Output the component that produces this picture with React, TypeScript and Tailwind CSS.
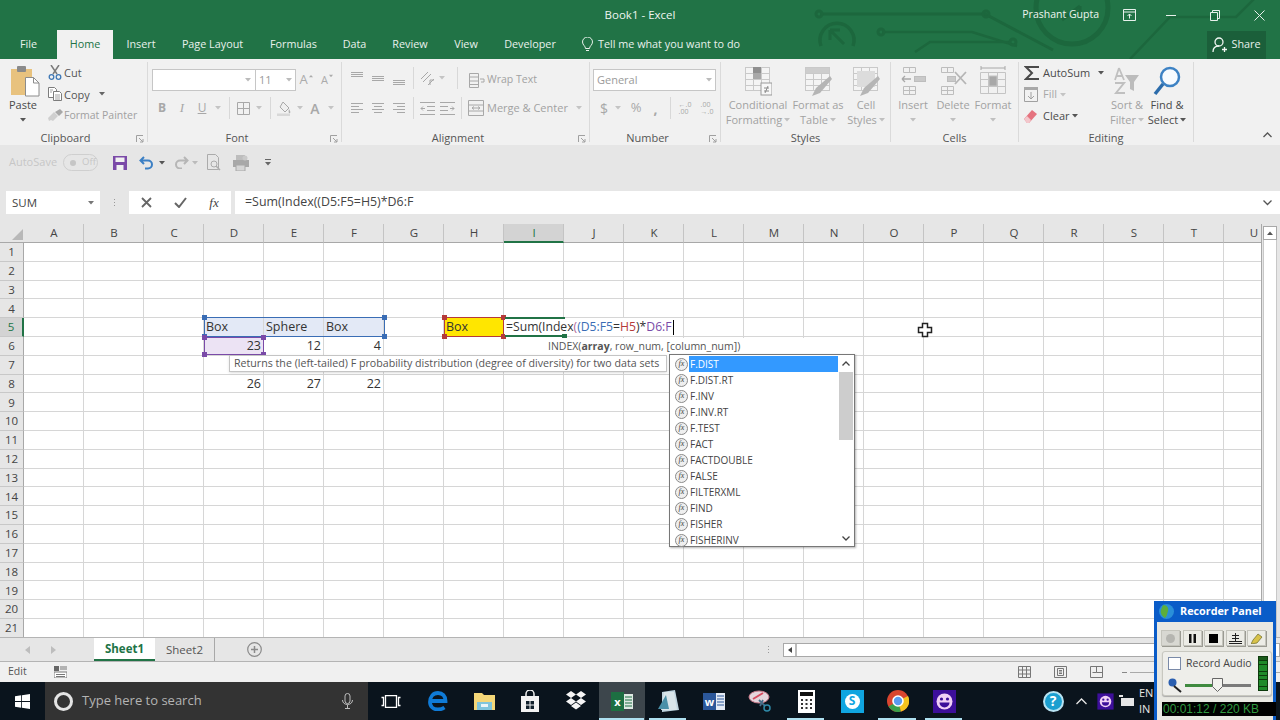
import type { ReactNode } from 'react';

const COLUMNS = ['A', 'B', 'C', 'D', 'E', 'F', 'G', 'H', 'I', 'J', 'K', 'L', 'M', 'N', 'O', 'P', 'Q', 'R', 'S', 'T', 'U'];
const ROWS = Array.from({ length: 21 }, (_, i) => i + 1);
const FUNCTIONS = ['F.DIST', 'F.DIST.RT', 'F.INV', 'F.INV.RT', 'F.TEST', 'FACT', 'FACTDOUBLE', 'FALSE', 'FILTERXML', 'FIND', 'FISHER', 'FISHERINV'];

const CELLS: Record<string, { text: string; right?: boolean; bg?: string }> = {
  D5: { text: 'Box', bg: 'bg-[#e3e9f6]' },
  E5: { text: 'Sphere', bg: 'bg-[#e3e9f6]' },
  F5: { text: 'Box', bg: 'bg-[#e3e9f6]' },
  H5: { text: 'Box', bg: 'bg-[#ffe600]' },
  D6: { text: '23', right: true, bg: 'bg-[#ece3f4]' },
  E6: { text: '12', right: true },
  F6: { text: '4', right: true },
  D8: { text: '26', right: true },
  E8: { text: '27', right: true },
  F8: { text: '22', right: true },
};

function Caret({ className = 'text-[#a5a5a5]' }: { className?: string }) {
  return (
    <svg width="6" height="4" viewBox="0 0 6 4" className={className}>
      <path d="M0 0h6L3 3.5z" fill="currentColor" />
    </svg>
  );
}

function Slot({ className, children }: { className: string; children?: ReactNode }) {
  return <div className={`flex h-full shrink-0 items-center justify-center ${className}`}>{children}</div>;
}

function Sep({ className = 'w-[10px]' }: { className?: string }) {
  return (
    <div className={`flex h-full shrink-0 justify-center ${className}`}>
      <div className="h-full w-px bg-[#d8d8d8]" />
    </div>
  );
}

function Launcher() {
  return (
    <svg width="8" height="8" viewBox="0 0 8 8" className="absolute bottom-[-1px] right-[3px] text-[#a0a0a0]">
      <path d="M0.500 7V0.500H7M3 3l4 4M7 4v3H4" fill="none" stroke="currentColor" />
    </svg>
  );
}

function Group({
  className,
  label,
  labelClass = '',
  launcher,
  children,
}: {
  className: string;
  label: string;
  labelClass?: string;
  launcher?: boolean;
  children: ReactNode;
}) {
  return (
    <div className={`relative mt-[3px] flex h-[80px] shrink-0 flex-col border-r border-[#dadada] ${className}`}>
      <div className="h-[69px] shrink-0">{children}</div>
      <div className={`h-[14px] shrink-0 text-center text-[11px] leading-[14px] text-[#555] ${labelClass}`}>{label}</div>
      {launcher && <Launcher />}
    </div>
  );
}

function BigBtn({
  className,
  icon,
  lines,
  caretInline,
  dim = true,
}: {
  className: string;
  icon: ReactNode;
  lines: string[];
  caretInline?: boolean;
  dim?: boolean;
}) {
  return (
    <div className={`flex shrink-0 flex-col items-center pt-[3px] text-[11px] leading-[15px] ${dim ? 'text-[#a2a2a2]' : 'text-[#4a4a4a]'} ${className}`}>
      <div className="flex h-[32px] items-center justify-center">{icon}</div>
      {lines.map((line, i) => (
        <div key={line} className="flex items-center gap-[2px] whitespace-nowrap">
          {line}
          {caretInline && i === lines.length - 1 && <Caret className={dim ? 'text-[#c0c0c0]' : 'text-[#555]'} />}
        </div>
      ))}
      {!caretInline && lines.length === 1 && (
        <div className="flex h-[15px] items-center">
          <Caret className={dim ? 'text-[#c0c0c0]' : 'text-[#555]'} />
        </div>
      )}
    </div>
  );
}

function AlignLines({ rows }: { rows: number[][] }) {
  return (
    <svg width="14" height="14" viewBox="0 0 14 14" className="text-[#a8a8a8]">
      {rows.map(([y, x, w]) => (
        <rect key={y} x={x} y={y} width={w} height="1" fill="currentColor" />
      ))}
    </svg>
  );
}

function PasteIcon() {
  return (
    <svg width="29" height="33" viewBox="0 0 29 33" className="ml-[4px]">
      <rect x="0" y="4" width="21" height="26" fill="#e8c27e" />
      <rect x="6" y="1" width="9" height="6" rx="1" fill="#8a8a8a" />
      <path d="M14.500 12.500h8l5.500 5.500v13h-13.500z" fill="#fff" stroke="#8c8c8c" />
      <path d="M22.500 12.500v5.500h5.500" fill="none" stroke="#8c8c8c" />
    </svg>
  );
}

function CircuitArt() {
  return (
    <svg width="480" height="59" viewBox="0 0 480 59" className="absolute right-0 top-0 text-[#1c673d]">
      <g fill="none" stroke="currentColor" strokeWidth="3">
        <path d="M20 14h165l68 36" />
        <circle cx="19" cy="14" r="3" />
        <circle cx="186" cy="14" r="3" />
        <path d="M82 32h90l45 14" strokeWidth="2.500" />
        <circle cx="81" cy="32" r="3" />
        <path d="M115 52l15-10h80" strokeWidth="2.500" />
        <circle cx="213" cy="42" r="3" />
        <path d="M21 46a17 17 0 1 1 32 0" strokeWidth="3.500" />
        <path d="M30 30l14 14M30 30h10M30 30v10" strokeWidth="3" />
        <circle cx="272" cy="8" r="36" strokeWidth="5" />
        <path d="M262 20l18-14M280 6v10" />
        <path d="M330 59l40-42h66l30-30" strokeWidth="2.500" />
      </g>
    </svg>
  );
}

function TitleBar() {
  return (
    <div className="relative flex h-[30px] items-center text-[11.500px] text-[#eef5f0]">
      <div className="flex-1" />
      <div className="relative">Book1 - Excel</div>
      <div className="relative flex h-full flex-1 items-center justify-end">
        <span className="mr-[9px] text-[10.500px]">Prashant Gupta</span>
        <Slot className="w-[42px]">
          <svg width="13" height="12" viewBox="0 0 13 12" fill="none" stroke="#e8f1ec">
            <path d="M.5.500h12v11H.5zM.5 3h12M6.500 9.500V5M4.500 7l2-2 2 2" />
          </svg>
        </Slot>
        <Slot className="w-[42px]">
          <div className="h-px w-[10px] bg-[#e8f1ec]" />
        </Slot>
        <Slot className="w-[46px]">
          <svg width="10" height="11" viewBox="0 0 10 11" fill="none" stroke="#e8f1ec">
            <path d="M.5 2.500h7v8h-7zM2.500 2.500v-2h7v8h-2" />
          </svg>
        </Slot>
        <Slot className="w-[42px]">
          <svg width="11" height="11" viewBox="0 0 11 11" stroke="#e8f1ec">
            <path d="M.5.500l10 10M10.500.500l-10 10" />
          </svg>
        </Slot>
      </div>
    </div>
  );
}

function TabRow() {
  const tabs = [
    ['Insert', 'w-[56px]'],
    ['Page Layout', 'w-[87px]'],
    ['Formulas', 'w-[75px]'],
    ['Data', 'w-[47px]'],
    ['Review', 'w-[64px]'],
    ['View', 'w-[48px]'],
    ['Developer', 'w-[80px]'],
  ];
  return (
    <div className="relative flex h-[29px] items-center text-[10.800px] text-[#e8f1ec]">
      <Slot className="w-[57px]">File</Slot>
      <Slot className="w-[56px] bg-[#f1f1f1] text-[#217346]">Home</Slot>
      {tabs.map(([name, width]) => (
        <Slot key={name} className={width}>
          {name}
        </Slot>
      ))}
      <div className="ml-[12px] flex items-center gap-[5px]">
        <svg width="11" height="15" viewBox="0 0 11 15" fill="none" stroke="#e8f1ec">
          <path d="M3.500 11.500c0-2.500-3-3.500-3-6.500a5 5 0 0 1 10 0c0 3-3 4-3 6.500zM4 13.500h3" />
        </svg>
        <span>Tell me what you want to do</span>
      </div>
      <div className="ml-auto mr-[14px] flex h-[28px] w-[59px] items-center justify-center gap-[4px] bg-[#1b5f3a]">
        <svg width="15" height="16" viewBox="0 0 15 16" fill="none" stroke="#f0f6f2" strokeWidth="1.300">
          <circle cx="7" cy="5" r="4" />
          <path d="M1 15c0-4 2.500-6 6-6M10 12.500h5M12.500 10v5" />
        </svg>
        <span>Share</span>
      </div>
    </div>
  );
}

function ClipboardGroup() {
  return (
    <Group className="w-[148px]" label="Clipboard" labelClass="pr-[16px]" launcher>
      <div className="flex h-full">
        <BigBtn className="w-[46px]" dim={false} icon={<PasteIcon />} lines={['Paste']} />
        <div className="flex flex-col text-[11px] leading-[21.500px]">
          <div className="flex h-[21.500px] items-center text-[#555]">
            <Slot className="w-[18px]">
              <svg width="14" height="15" viewBox="0 0 14 15" fill="none">
                <path d="M3 0l6 9M11 0L5 9" stroke="#7a7a7a" strokeWidth="1.500" />
                <circle cx="3.500" cy="12" r="2.300" stroke="#3f78b5" strokeWidth="1.300" />
                <circle cx="10.500" cy="12" r="2.300" stroke="#3f78b5" strokeWidth="1.300" />
              </svg>
            </Slot>
            Cut
          </div>
          <div className="flex h-[21.500px] items-center text-[#555]">
            <Slot className="w-[18px]">
              <svg width="14" height="14" viewBox="0 0 14 14" fill="#fff" stroke="#7c7c7c">
                <path d="M.5.500h6l2 2v8h-8z" />
                <path d="M5.500 4.500h6l2 2v7h-8z" />
                <path d="M7 8h5M7 10h5M7 12h5M2 3h3M2 5h2" strokeWidth=".7" />
              </svg>
            </Slot>
            Copy
            <Caret className="ml-[9px] text-[#666]" />
          </div>
          <div className="flex h-[21.500px] items-center text-[10.500px] text-[#a0a0a0]">
            <Slot className="w-[18px]">
              <svg width="15" height="13" viewBox="0 0 15 13">
                <path d="M0 9l6-6 4 4-5 5-2-1-2 1z" fill="#cfcfcf" />
                <path d="M7 3l5-3 3 3-4 4z" fill="#a8a8a8" />
              </svg>
            </Slot>
            Format Painter
          </div>
        </div>
      </div>
    </Group>
  );
}

function FontGroup() {
  return (
    <Group className="w-[194px]" label="Font" labelClass="pr-[15px]" launcher>
      <div className="pl-[4px] pt-[7px]">
        <div className="flex h-[22px] items-center pr-[3px]">
          <div className="flex h-full w-[104px] items-center justify-end border border-[#c6c6c6] bg-white pr-[4px]">
            <Caret className="text-[#bbb]" />
          </div>
          <div className="flex h-full w-[40px] items-center justify-between border border-l-0 border-[#c6c6c6] bg-white px-[3px] text-[11px] text-[#9a9a9a]">
            11
            <Caret className="text-[#bbb]" />
          </div>
          <Slot className="w-[21px] text-[13px] text-[#ababab]">
            A
            <Caret className="mb-[8px] rotate-180 scale-75 text-[#ababab]" />
          </Slot>
          <Slot className="w-[21px] text-[11px] text-[#ababab]">
            A
            <Caret className="mb-[8px] scale-75 text-[#ababab]" />
          </Slot>
        </div>
        <div className="mt-[6px] flex h-[22px] items-center">
          <Slot className="w-[20px] text-[12px] font-bold text-[#a8a8a8]">B</Slot>
          <Slot className="w-[20px] font-['Liberation_Serif',serif] text-[13px] italic text-[#a8a8a8]">I</Slot>
          <Slot className="w-[20px] text-[12px] text-[#a8a8a8] underline">U</Slot>
          <Slot className="w-[12px]">
            <Caret className="text-[#c4c4c4]" />
          </Slot>
          <Sep />
          <Slot className="w-[18px]">
            <svg width="13" height="13" viewBox="0 0 13 13" fill="none" stroke="#a8a8a8">
              <path d="M.5.500h12v12H.5zM6.500.500v12M.5 6.500h12" />
            </svg>
          </Slot>
          <Slot className="w-[13px]">
            <Caret className="text-[#c4c4c4]" />
          </Slot>
          <Sep />
          <Slot className="w-[19px]">
            <svg width="15" height="15" viewBox="0 0 15 15">
              <path d="M6 1l6 6-4 4-5-5z" fill="#efefef" stroke="#a8a8a8" />
              <path d="M12 8c1 2 2 3 1 4s-2-1-1-4z" fill="#b0b0b0" />
              <rect x="0" y="12.500" width="13" height="2.500" fill="#d8d8d8" />
            </svg>
          </Slot>
          <Slot className="w-[11px]">
            <Caret className="text-[#c4c4c4]" />
          </Slot>
          <Slot className="w-[20px] text-[14px] font-semibold text-[#a8a8a8]">A</Slot>
          <Slot className="w-[11px]">
            <Caret className="text-[#c4c4c4]" />
          </Slot>
        </div>
      </div>
    </Group>
  );
}

function AlignmentGroup() {
  const wrapIcon = (
    <svg width="16" height="15" viewBox="0 0 16 15" fill="none" stroke="#a8a8a8">
      <path d="M.5.500h9v14h-9zM.5 4h9M.5 8h9M.5 11.500h9M11 6h4v3h-3" />
    </svg>
  );
  const mergeIcon = (
    <svg width="16" height="16" viewBox="0 0 16 16" fill="none" stroke="#a8a8a8">
      <path d="M.5.500h15v15H.5zM.5 5h15M.5 11h15M4 8h8M4 8l2-1.500M4 8l2 1.500M12 8l-2-1.500M12 8l-2 1.500" />
    </svg>
  );
  return (
    <Group className="w-[248px]" label="Alignment" labelClass="pr-[15px]" launcher>
      <div className="pl-[4px] pt-[5px]">
        <div className="flex h-[22px] items-center">
          <Slot className="w-[21px]"><AlignLines rows={[[1, 1, 12], [3, 1, 12], [5, 1, 12]]} /></Slot>
          <Slot className="w-[21px]"><AlignLines rows={[[5, 1, 12], [7, 1, 12], [9, 1, 12]]} /></Slot>
          <Slot className="w-[21px]"><AlignLines rows={[[9, 1, 12], [11, 1, 12], [13, 1, 12]]} /></Slot>
          <Sep className="w-[8px]" />
          <Slot className="w-[21px]">
            <svg width="15" height="15" viewBox="0 0 15 15" fill="none" stroke="#a8a8a8">
              <path d="M1 8l7-7M3 11l8-8M8 14l6-6M10 14V9h4" />
            </svg>
          </Slot>
          <Slot className="w-[8px]"><Caret className="text-[#c4c4c4]" /></Slot>
          <Sep className="w-[22px]" />
          <Slot className="mt-[4px] w-[18px]">{wrapIcon}</Slot>
          <span className="ml-px mt-[4px] text-[10.500px] text-[#a2a2a2]">Wrap Text</span>
        </div>
        <div className="mt-[8px] flex h-[22px] items-center">
          <Slot className="w-[21px]"><AlignLines rows={[[2, 1, 12], [5, 1, 8], [8, 1, 12], [11, 1, 8]]} /></Slot>
          <Slot className="w-[21px]"><AlignLines rows={[[2, 1, 12], [5, 3, 8], [8, 1, 12], [11, 3, 8]]} /></Slot>
          <Slot className="w-[21px]"><AlignLines rows={[[2, 1, 12], [5, 5, 8], [8, 1, 12], [11, 5, 8]]} /></Slot>
          <Sep className="w-[8px]" />
          <Slot className="w-[20px]">
            <svg width="15" height="13" viewBox="0 0 15 13" stroke="#a8a8a8" fill="none">
              <path d="M0 .500h15M7 4.500h8M7 8.500h8M0 12.500h15M5 6.500H1M1 6.500l2-2M1 6.500l2 2" />
            </svg>
          </Slot>
          <Slot className="w-[20px]">
            <svg width="15" height="13" viewBox="0 0 15 13" stroke="#a8a8a8" fill="none">
              <path d="M0 .500h15M0 4.500h8M0 8.500h8M0 12.500h15M10 6.500h4M14 6.500l-2-2M14 6.500l-2 2" />
            </svg>
          </Slot>
          <Sep className="w-[8px]" />
          <Slot className="ml-[2px] w-[18px]">{mergeIcon}</Slot>
          <span className="ml-[2px] text-[11px] text-[#a2a2a2]">Merge &amp; Center</span>
          <Caret className="ml-[8px] text-[#c4c4c4]" />
        </div>
      </div>
    </Group>
  );
}

function NumberGroup() {
  return (
    <Group className="w-[131px]" label="Number" labelClass="pr-[15px]" launcher>
      <div className="pl-[3px] pt-[7px]">
        <div className="flex h-[22px] w-[123px] items-center justify-between border border-[#c6c6c6] bg-white px-[3px] text-[11px] text-[#9a9a9a]">
          General
          <Caret className="text-[#bbb]" />
        </div>
        <div className="mt-[6px] flex h-[22px] items-center text-[#a8a8a8]">
          <Slot className="ml-[1px] w-[20px] text-[14px]">$</Slot>
          <Slot className="w-[8px]"><Caret className="text-[#c4c4c4]" /></Slot>
          <Slot className="ml-[4px] w-[20px] text-[13px]">%</Slot>
          <Slot className="w-[19px] text-[14px] font-bold">,</Slot>
          <Sep />
          <Slot className="w-[20px] text-[7px] leading-[7px]">←.0<br />.00</Slot>
          <Slot className="ml-[2px] w-[20px] text-[7px] leading-[7px]">.00<br />→.0</Slot>
        </div>
      </div>
    </Group>
  );
}

function GridIcon({ mark }: { mark: ReactNode }) {
  return (
    <svg width="28" height="30" viewBox="0 0 28 30">
      <g fill="#f4f4f4" stroke="#c9c9c9">
        <rect x="1.500" y="1.500" width="24" height="23" />
        <path d="M1.500 7.500h24M1.500 13.500h24M1.500 19.500h24M9.500 1.500v23M17.500 1.500v23" fill="none" />
      </g>
      {mark}
    </svg>
  );
}

function StylesGroup() {
  return (
    <Group className="w-[170px]" label="Styles">
      <div className="flex h-full pl-[7px]">
        <BigBtn
          className="w-[60px]"
          caretInline
          icon={
            <GridIcon
              mark={
                <>
                  <rect x="9" y="1" width="8" height="6" fill="#8f8f8f" />
                  <rect x="9" y="7" width="8" height="6" fill="#a8a8a8" />
                  <rect x="17" y="17" width="11" height="12" fill="#f7f7f7" stroke="#9a9a9a" />
                  <path d="M20 22h5M20 25h5M24 20l-3 7" stroke="#8a8a8a" fill="none" />
                </>
              }
            />
          }
          lines={['Conditional', 'Formatting']}
        />
        <BigBtn
          className="w-[60px]"
          caretInline
          icon={
            <GridIcon
              mark={
                <>
                  <rect x="2" y="2" width="23" height="5" fill="#cdcdcd" />
                  <path d="M8 30l4-8 14-12 2 3-12 14z" fill="#b5b5b5" />
                </>
              }
            />
          }
          lines={['Format as', 'Table']}
        />
        <BigBtn
          className="w-[36px]"
          caretInline
          icon={
            <GridIcon
              mark={
                <>
                  <rect x="5" y="5" width="18" height="16" fill="#dcdcdc" />
                  <path d="M8 30l4-8 14-12 2 3-12 14z" fill="#b5b5b5" />
                </>
              }
            />
          }
          lines={['Cell', 'Styles']}
        />
      </div>
    </Group>
  );
}

function CellsGroup() {
  return (
    <Group className="w-[128px]" label="Cells">
      <div className="flex h-full pl-[2px]">
        <BigBtn
          className="w-[40px]"
          icon={
            <svg width="25" height="30" viewBox="0 0 25 30" fill="none" stroke="#bdbdbd">
              <path d="M2.500 1.500h12v5h-12zM8.500 1.500v5M2.500 20.500h12v8h-12zM8.500 20.500v8M2.500 24.500h12" />
              <rect x="13.500" y="10.500" width="11" height="5" fill="#c9c9c9" />
              <path d="M1 13h9M1 13l3-3M1 13l3 3" stroke="#a8a8a8" strokeWidth="1.300" />
            </svg>
          }
          lines={['Insert']}
        />
        <BigBtn
          className="w-[40px]"
          icon={
            <svg width="28" height="30" viewBox="0 0 28 30" fill="none" stroke="#bdbdbd">
              <path d="M2.500 1.500h12v5h-12zM8.500 1.500v5M2.500 20.500h12v8h-12zM8.500 20.500v8M2.500 24.500h12" />
              <rect x="8.500" y="10.500" width="8" height="5" fill="#c9c9c9" />
              <path d="M16 6l11 12M27 6L16 18" stroke="#b5b5b5" strokeWidth="1.800" />
            </svg>
          }
          lines={['Delete']}
        />
        <BigBtn
          className="w-[40px]"
          icon={
            <svg width="26" height="32" viewBox="0 0 26 32" fill="none" stroke="#c4c4c4">
              <path d="M1 3h24M1 1v4M25 1v4" stroke="#a8a8a8" />
              <path d="M.5 7.500h25v21H.5zM8.500 7.500v21M17.500 7.500v21M.5 14.500h25M.5 21.500h25" />
              <rect x="9" y="11" width="8" height="10" fill="#a8a8a8" />
            </svg>
          }
          lines={['Format']}
        />
      </div>
    </Group>
  );
}

function EditingGroup() {
  return (
    <Group className="w-[175px]" label="Editing">
      <div className="flex h-full">
        <div className="flex w-[88px] flex-col pl-[5px] text-[11px]">
          <div className="flex h-[22px] items-center text-[#4a4a4a]">
            <Slot className="w-[19px] justify-start">
              <svg width="16" height="14" viewBox="0 0 16 14" fill="none" stroke="#4a4a4a" strokeWidth="2">
                <path d="M15 1H2l6 6-6 6h13" />
              </svg>
            </Slot>
            AutoSum
            <Caret className="ml-[8px] text-[#555]" />
          </div>
          <div className="flex h-[21px] items-center text-[#a8a8a8]">
            <Slot className="w-[19px] justify-start">
              <svg width="14" height="15" viewBox="0 0 14 15" fill="none" stroke="#a0a0a0">
                <path d="M.5 2.500h13v12H.5z" />
                <rect x="0" y="0" width="14" height="3" fill="#a8a8a8" stroke="none" />
                <path d="M7 5v7M4 9l3 3 3-3" />
              </svg>
            </Slot>
            Fill
            <Caret className="ml-[3px] text-[#c4c4c4]" />
          </div>
          <div className="flex h-[22px] items-center text-[#4a4a4a]">
            <Slot className="w-[19px] justify-start">
              <svg width="13" height="13" viewBox="0 0 13 13">
                <path d="M0 9l8-9 5 4-8 9H3z" fill="#e5737f" />
                <path d="M0 9l3-3 4 4-2 3H3z" fill="#f3c7cc" />
              </svg>
            </Slot>
            Clear
            <Caret className="ml-[2px] text-[#555]" />
          </div>
        </div>
        <BigBtn
          className="w-[40px]"
          caretInline
          icon={
            <svg width="26" height="30" viewBox="0 0 26 30">
              <path d="M5 2l5 12M5 2l-4 12M2 10h7" stroke="#c0c0c0" strokeWidth="1.800" fill="none" />
              <path d="M1 17h9l-8 10h9" stroke="#c0c0c0" strokeWidth="2" fill="none" />
              <path d="M11 9h14l-5 7v9l-4-2v-7z" fill="#bcbcbc" />
            </svg>
          }
          lines={['Sort &', 'Filter']}
        />
        <BigBtn
          className="w-[40px]"
          dim={false}
          caretInline
          icon={
            <svg width="28" height="30" viewBox="0 0 28 30" fill="none">
              <circle cx="17" cy="11" r="9" stroke="#3d82c4" strokeWidth="2.500" fill="#f7fbff" />
              <path d="M10 18L2 28" stroke="#2c6cab" strokeWidth="3.500" />
            </svg>
          }
          lines={['Find &', 'Select']}
        />
      </div>
    </Group>
  );
}

function Ribbon() {
  return (
    <div className="flex h-[86px] items-start bg-[#f1f1f1]">
      <ClipboardGroup />
      <FontGroup />
      <AlignmentGroup />
      <NumberGroup />
      <StylesGroup />
      <CellsGroup />
      <EditingGroup />
      <div className="mt-[73px] flex flex-1 justify-end pr-[8px]">
        <svg width="9" height="6" viewBox="0 0 9 6" fill="none" stroke="#555" strokeWidth="1.300">
          <path d="M.5 5l4-4 4 4" />
        </svg>
      </div>
    </div>
  );
}

function QuickAccess() {
  return (
    <div className="flex h-[35px] items-center bg-[#e6e6e6] pl-[9px] text-[11px]">
      <span className="w-[52px] text-[#c6c6c6]">AutoSave</span>
      <div className="ml-[2px] flex h-[17px] w-[35px] items-center gap-[6px] rounded-full border border-[#cfcfcf] pl-[6px] text-[9.500px] text-[#c6c6c6]">
        <span className="h-[6px] w-[6px] rounded-full bg-[#c6c6c6]" />
        Off
      </div>
      <Slot className="ml-[12px] w-[20px]">
        <svg width="14" height="14" viewBox="0 0 14 14">
          <path d="M0 0h14v14H0z" fill="#7b4aa8" />
          <rect x="2.500" y="1.500" width="9" height="4.500" fill="#f1f1f1" />
          <rect x="3.500" y="9" width="7" height="5" fill="#f1f1f1" />
        </svg>
      </Slot>
      <Slot className="ml-[7px] w-[20px]">
        <svg width="16" height="14" viewBox="0 0 16 14" fill="none" stroke="#3b7fc4" strokeWidth="2">
          <path d="M5 1L1.500 4.500 5 8M2 4.500h7a4 4 0 0 1 0 8H6" />
        </svg>
      </Slot>
      <Slot className="w-[10px]"><Caret className="text-[#555]" /></Slot>
      <Slot className="ml-[4px] w-[20px]">
        <svg width="15" height="13" viewBox="0 0 15 13" fill="none" stroke="#b6b6b6" strokeWidth="2">
          <path d="M10 1l3.500 3.500L10 8M13 4.500H6a4 4 0 0 0 0 8h2" />
        </svg>
      </Slot>
      <Slot className="w-[8px]"><Caret className="text-[#bbb]" /></Slot>
      <Slot className="ml-[5px] w-[20px]">
        <svg width="14" height="17" viewBox="0 0 14 17" fill="none" stroke="#ababab">
          <path d="M.5.500h8l3 3v12H.5z" />
          <circle cx="7" cy="10" r="3" />
          <path d="M9 12l4 4" strokeWidth="1.500" />
        </svg>
      </Slot>
      <Slot className="ml-[7px] w-[20px]">
        <svg width="16" height="16" viewBox="0 0 16 16">
          <rect x="3" y="0" width="9" height="5" fill="#bdbdbd" />
          <rect x="0" y="5" width="16" height="7" fill="#a8a8a8" />
          <rect x="3" y="10" width="9" height="6" fill="#d5d5d5" stroke="#a8a8a8" />
          <circle cx="12" cy="3" r="2.500" fill="#c9c9c9" />
        </svg>
      </Slot>
      <Slot className="ml-[12px] w-[10px]">
        <svg width="6" height="7" viewBox="0 0 6 7" fill="#666">
          <path d="M0 0h6v1H0zM0 3h6L3 6.500z" />
        </svg>
      </Slot>
    </div>
  );
}

function FormulaBar() {
  return (
    <div className="flex h-[44px] items-start bg-[#e6e6e6] pl-[6px] pt-[11px] text-[11.500px] text-[#444]">
      <div className="flex h-[23px] w-[94px] items-center justify-between bg-white pl-[6px] pr-[6px]">
        SUM
        <Caret className="text-[#777]" />
      </div>
      <div className="mx-[13px] flex h-[23px] w-[2px] flex-col items-center justify-center gap-[2px]">
        <span className="h-px w-px bg-[#999]" />
        <span className="h-px w-px bg-[#999]" />
        <span className="h-px w-px bg-[#999]" />
      </div>
      <div className="ml-[1px] flex h-[23px] w-[102px] items-center bg-white">
        <Slot className="w-[34px]">
          <svg width="11" height="11" viewBox="0 0 11 11" stroke="#666" strokeWidth="1.800">
            <path d="M1 1l9 9M10 1l-9 9" />
          </svg>
        </Slot>
        <Slot className="w-[34px]">
          <svg width="13" height="11" viewBox="0 0 13 11" fill="none" stroke="#666" strokeWidth="2">
            <path d="M1 6l4 4 7-9" />
          </svg>
        </Slot>
        <Slot className="w-[34px] font-['Liberation_Serif',serif] text-[13px] italic">fx</Slot>
      </div>
      <div className="ml-[4px] flex h-[23px] flex-1 items-center justify-between bg-white pl-[10px] pr-[8px] text-[12.400px]">
        =Sum(Index((D5:F5=H5)*D6:F
        <svg width="9" height="6" viewBox="0 0 9 6" fill="none" stroke="#555" strokeWidth="1.300">
          <path d="M.5.500l4 4 4-4" />
        </svg>
      </div>
    </div>
  );
}

function SheetGrid() {
  return (
    <div className="grid w-max grid-cols-[24px_repeat(21,60px)] grid-rows-[19px_repeat(21,18.800px)]">
      <div className="relative border-b border-[#a8a8a8] bg-[#e6e6e6]">
        <svg width="11" height="11" viewBox="0 0 11 11" className="absolute bottom-[2px] right-[1px]">
          <path d="M11 0v11H0z" fill="#b8b8b8" />
        </svg>
      </div>
      {COLUMNS.map((col) => (
        <div
          key={col}
          className={`flex items-center justify-center border-r border-[#c4c4c4] pl-px text-[11.500px] ${
            col === 'I' ? 'border-b-2 border-b-[#217346] bg-[#d3d3d3] text-[#217346]' : 'border-b border-b-[#a8a8a8] bg-[#e6e6e6] text-[#444]'
          }`}
        >
          {col}
        </div>
      ))}
      {ROWS.map((row) => (
        <div key={row} className="contents">
          <div
            className={`flex items-center justify-center border-b border-[#c8c8c8] text-[11.500px] ${
              row === 5 ? 'border-r-2 border-r-[#217346] bg-[#d3d3d3] text-[#217346]' : 'border-r border-r-[#a8a8a8] bg-[#e6e6e6] text-[#444]'
            }`}
          >
            {row}
          </div>
          {COLUMNS.map((col) => {
            const cell = CELLS[`${col}${row}`];
            return (
              <div
                key={col}
                className={`flex items-center overflow-hidden whitespace-nowrap border-b border-r border-[#d6d6d6] px-[2px] pt-px text-[12.500px] text-[#333] ${
                  cell?.right ? 'justify-end' : ''
                } ${cell?.bg ?? 'bg-white'}`}
              >
                {cell?.text}
              </div>
            );
          })}
        </div>
      ))}
    </div>
  );
}

function RangeBox({ className, edge, handle }: { className: string; edge: string; handle: string }) {
  return (
    <div className={`absolute border-[1.500px] ${edge} ${className}`}>
      <span className={`absolute -left-[3px] -top-[3px] h-[5px] w-[5px] ${handle}`} />
      <span className={`absolute -right-[3px] -top-[3px] h-[5px] w-[5px] ${handle}`} />
      <span className={`absolute -bottom-[3px] -left-[3px] h-[5px] w-[5px] ${handle}`} />
      <span className={`absolute -bottom-[3px] -right-[3px] h-[5px] w-[5px] ${handle}`} />
    </div>
  );
}

function FormulaEditor() {
  return (
    <div className="absolute left-[505px] top-[94px] flex h-[18px] w-[175px] items-center whitespace-pre bg-white pl-px text-[12.200px] text-[#333]">
      =Sum(Index<span className="text-[#b06a9a]">(</span>
      <span className="text-[#3a6db5]">(D5:F5</span>=<span className="text-[#b53a3a]">H5</span>)*
      <span className="text-[#7a4aa8]">D6:F</span>
      <span className="ml-px h-[15px] w-px bg-black" />
    </div>
  );
}

function Tooltips() {
  return (
    <>
      <div className="absolute left-[544px] top-[114px] flex h-[18px] w-[294px] items-center bg-white pl-[4px] text-[10.500px] text-[#555]">
        <span>INDEX(<b>array</b>, row_num, [column_num])</span>
      </div>
      <div className="absolute left-[229px] top-[131px] flex h-[17px] w-[438px] items-center whitespace-nowrap border border-[#c4c4c4] bg-white pl-[4px] text-[10.650px] text-[#555] shadow-sm">
        Returns the (left-tailed) F probability distribution (degree of diversity) for two data sets
      </div>
    </>
  );
}

function FunctionList() {
  return (
    <div className="absolute left-[669px] top-[130px] flex h-[193px] w-[186px] border border-[#777] bg-white shadow-[1px_1px_2px_rgba(0,0,0,0.3)]">
      <div className="w-[168px] pt-px">
        {FUNCTIONS.map((name, i) => (
          <div key={name} className="flex h-[16px] items-center pl-[5px] text-[10px] text-[#444]">
            <span className="flex h-[13px] w-[13px] shrink-0 items-center justify-center rounded-full border border-[#8a8a8a] bg-[#efefef] font-['Liberation_Serif',serif] text-[8px] italic leading-none text-[#444]">
              fx
            </span>
            <span className={`ml-[1px] flex h-full flex-1 items-center pl-[1px] ${i === 0 ? 'bg-[#3399ff] text-white' : ''}`}>{name}</span>
          </div>
        ))}
      </div>
      <div className="flex w-[16px] flex-col items-center">
        <div className="flex h-[17px] items-center">
          <svg width="8" height="5" viewBox="0 0 8 5" fill="none" stroke="#444" strokeWidth="1.300">
            <path d="M.5 4.500L4 1l3.500 3.500" />
          </svg>
        </div>
        <div className="h-[68px] w-[14px] bg-[#cdcdcd]" />
        <div className="flex-1" />
        <div className="flex h-[15px] items-center">
          <svg width="8" height="5" viewBox="0 0 8 5" fill="none" stroke="#444" strokeWidth="1.300">
            <path d="M.5.500L4 4l3.500-3.500" />
          </svg>
        </div>
      </div>
    </div>
  );
}

function Sheet() {
  return (
    <div className="flex h-[413px] bg-white">
      <div className="relative w-[1262px] overflow-hidden border-r border-[#a8a8a8]">
        <SheetGrid />
        <RangeBox className="left-[204px] top-[93px] h-[20px] w-[181px]" edge="border-[#3a6db5]" handle="bg-[#3a6db5]" />
        <RangeBox className="left-[204px] top-[113px] h-[18px] w-[60px]" edge="border-[#7a4aa8]" handle="bg-[#7a4aa8]" />
        <RangeBox className="left-[444px] top-[93px] h-[20px] w-[60px]" edge="border-[#b53a3a]" handle="bg-[#b53a3a]" />
        <FormulaEditor />
        <div className="absolute left-[505px] top-[93px] h-[2px] w-[60px] bg-[#217346]" />
        <div className="absolute left-[505px] top-[111px] h-[2px] w-[60px] bg-[#217346]" />
        <span className="absolute left-[562px] top-[110px] h-[5px] w-[5px] bg-[#217346]" />
        <Tooltips />
        <FunctionList />
        <svg width="16" height="16" viewBox="0 0 16 16" className="absolute left-[917px] top-[98px]">
          <path d="M5.500 1.500h5v4h4v5h-4v4h-5v-4h-4v-5h4z" fill="#fff" stroke="#222" strokeWidth="1.500" />
        </svg>
      </div>
      <div className="flex-1 bg-[#e6e6e6] pl-[1px] pr-[3px] pt-[2px]">
        <div className="flex h-[14px] items-center justify-center border border-[#a8a8a8] bg-white">
          <Caret className="rotate-180 text-[#555]" />
        </div>
        <div className="h-[397px] border-x border-[#c8c8c8] bg-white" />
      </div>
    </div>
  );
}

function SheetTabs() {
  return (
    <div className="flex h-[25px] items-center border-b border-t border-[#b4b4b4] bg-[#e6e6e6] text-[11.500px]">
      <Slot className="ml-[21px] w-[12px]">
        <svg width="5" height="8" viewBox="0 0 5 8"><path d="M5 0v8L0 4z" fill="#bdbdbd" /></svg>
      </Slot>
      <Slot className="ml-[14px] w-[12px]">
        <svg width="5" height="8" viewBox="0 0 5 8"><path d="M0 0v8l5-4z" fill="#bdbdbd" /></svg>
      </Slot>
      <Slot className="ml-[35px] w-[61px] self-start border-b-2 border-b-[#217346] bg-white font-bold text-[#217346]">Sheet1</Slot>
      <Slot className="w-[60px] border-r border-[#a8a8a8] text-[#555]">Sheet2</Slot>
      <Slot className="ml-[31px] w-[16px]">
        <svg width="15" height="15" viewBox="0 0 15 15" fill="none" stroke="#8a8a8a" strokeWidth="1.200">
          <circle cx="7.500" cy="7.500" r="6.800" />
          <path d="M7.500 4v7M4 7.500h7" strokeWidth="1.500" />
        </svg>
      </Slot>
      <div className="ml-[505px] flex h-[13px] w-[2px] flex-col items-center justify-center gap-[2px]">
        <span className="h-px w-px bg-[#999]" />
        <span className="h-px w-px bg-[#999]" />
        <span className="h-px w-px bg-[#999]" />
      </div>
      <div className="ml-[14px] flex h-[14px] flex-1 items-center border border-[#a8a8a8] bg-white">
        <Slot className="w-[13px] border-r-2 border-[#bcbcbc]">
          <svg width="4" height="6" viewBox="0 0 4 6"><path d="M4 0v6L0 3z" fill="#444" /></svg>
        </Slot>
      </div>
    </div>
  );
}

function StatusBar() {
  return (
    <div className="flex h-[20px] items-center bg-[#f0f0f0] pl-[8px] text-[10.500px] text-[#555]">
      <span className="w-[46px]">Edit</span>
      <svg width="13" height="12" viewBox="0 0 13 12">
        <rect x="0" y="0" width="5" height="5" fill="#666" />
        <rect x="0" y="6" width="13" height="6" fill="#fff" stroke="#777" />
        <path d="M6 1h7M6 3h7M2 8.500h9M2 10.500h9" stroke="#777" />
      </svg>
      <Slot className="ml-[939px] w-[36px]">
        <svg width="13" height="12" viewBox="0 0 13 12" fill="none" stroke="#777">
          <path d="M.5.500h12v11H.5zM4.500.500v11M8.500.500v11M.5 4h12M.5 8h12" />
        </svg>
      </Slot>
      <Slot className="w-[36px]">
        <svg width="13" height="12" viewBox="0 0 13 12" fill="none" stroke="#777">
          <path d="M.5.500h12v11H.5zM3.500 2.500h6v7h-6zM5 4.500h3M5 6h3M5 7.500h3" />
        </svg>
      </Slot>
      <Slot className="w-[36px]">
        <svg width="13" height="12" viewBox="0 0 13 12" fill="none" stroke="#777">
          <path d="M.5.500h12v11H.5zM6.500.500v6h-4M6.500 6.500h6" />
        </svg>
      </Slot>
      <div className="ml-[8px] h-px w-[5px] bg-[#888]" />
      <div className="ml-[3px] h-px flex-1 bg-[#aaa]" />
    </div>
  );
}

function TaskIcon({ children, className = '' }: { children: ReactNode; className?: string }) {
  return <Slot className={`w-[46px] ${className}`}>{children}</Slot>;
}

function YahooIcon() {
  return (
    <svg width="23" height="23" viewBox="0 0 23 23">
      <rect width="23" height="23" fill="#3d0f9a" />
      <circle cx="11.500" cy="11.500" r="8" fill="#f0d0f5" />
      <circle cx="8.500" cy="9" r="1.600" fill="#3d0f9a" />
      <circle cx="14.500" cy="9" r="1.600" fill="#3d0f9a" />
      <path d="M6.500 12.500h10a5 5 0 0 1-10 0z" fill="#3d0f9a" />
    </svg>
  );
}

function Taskbar() {
  return (
    <div className="relative flex h-[38px] items-center bg-[#0a141d]">
      <Slot className="w-[45px]">
        <svg width="15" height="15" viewBox="0 0 15 15" fill="#fff">
          <path d="M0 2.200L6.200 1.300V7H0zM7 1.200L15 0v7H7zM0 8h6.200v5.700L0 12.800zM7 8h8v7l-8-1.200z" />
        </svg>
      </Slot>
      <div className="flex h-full w-[323px] items-center bg-[#333333] pl-[9px] text-[13px] text-[#b4b4b4]">
        <span className="h-[19px] w-[19px] rounded-full border-[3px] border-[#e4e4e4]" />
        <span className="ml-[9px]">Type here to search</span>
        <svg width="11" height="16" viewBox="0 0 11 16" fill="none" stroke="#bdbdbd" className="ml-auto mr-[15px]">
          <rect x="3" y=".5" width="5" height="10" rx="2.500" />
          <path d="M.5 7c0 6 10 6 10 0M5.500 12v3M3 15.500h5" />
        </svg>
      </div>
      <TaskIcon>
        <svg width="20" height="13" viewBox="0 0 20 13" fill="none" stroke="#fff" strokeWidth="1.300">
          <path d="M4.500.5h11v12h-11zM.5 2.500h2v8h-2M19.500 2.500h-2v8h2" />
        </svg>
      </TaskIcon>
      <div className="ml-px flex h-full items-center">
        <TaskIcon>
          <svg width="20" height="20" viewBox="0 0 20 20" fill="none" stroke="#0f7bd7" strokeWidth="3.800">
            <path d="M2 10h15.500C17.500 5 14.500 2 10 2 5 2 2 6 2 11c0 5 4 7.500 8 7.500 2.500 0 4.500-.7 6.500-2" />
          </svg>
        </TaskIcon>
        <TaskIcon>
          <svg width="21" height="18" viewBox="0 0 21 18">
            <path d="M0 1h8l2 2h11v15H0z" fill="#f4d778" />
            <rect x="3" y="10" width="15" height="8" fill="#7fc4dc" />
            <rect x="7" y="12" width="7" height="3" fill="#e9f4f8" />
          </svg>
        </TaskIcon>
        <TaskIcon>
          <svg width="20" height="22" viewBox="0 0 20 22" fill="#f2f2f2">
            <path d="M1 6h18v16H1z" />
            <path d="M6 8V4a4 4 0 0 1 8 0v4" fill="none" stroke="#f2f2f2" strokeWidth="1.500" />
            <path d="M6 11h3.500v3.500H6zM10.500 11H14v3.500h-3.500zM6 15.500h3.500V19H6zM10.500 15.500H14V19h-3.500z" fill="#10202c" />
          </svg>
        </TaskIcon>
        <TaskIcon>
          <svg width="22" height="20" viewBox="0 0 22 20" fill="#f5f5f5">
            <path d="M6 0l5 3.500L6 7 1 3.500zM16 0l5 3.500L16 7l-5-3.500zM6 7l5 3.500L6 14l-5-3.500zM16 7l5 3.500-5 3.500-5-3.500zM6 15l5-3.500 5 3.500-5 3.500z" />
          </svg>
        </TaskIcon>
        <TaskIcon className="bg-[#3d464c]">
          <div className="flex h-[19px] w-[22px] items-center">
            <span className="flex h-[19px] w-[13px] items-center justify-center bg-[#1d6f42] text-[11px] font-bold leading-none text-white">x</span>
            <svg width="9" height="15" viewBox="0 0 9 15" fill="#dfe9e3">
              <path d="M0 0h9v15H0z" />
              <path d="M1 3h7M1 6h7M1 9h7M1 12h7" stroke="#1d6f42" />
            </svg>
          </div>
        </TaskIcon>
        <TaskIcon>
          <svg width="21" height="22" viewBox="0 0 21 22">
            <path d="M4 2l13-2 4 20-17 2z" fill="#bfd4df" />
            <path d="M6 2h10l3 18H3z" fill="#d9e5ea" />
            <path d="M0 19L8 5l3 14z" fill="#4a90a8" />
          </svg>
        </TaskIcon>
        <TaskIcon>
          <div className="flex h-[19px] w-[22px] items-center">
            <span className="flex h-[17px] w-[13px] items-center justify-center bg-[#2b579a] text-[11px] font-bold leading-none text-white">w</span>
            <svg width="9" height="17" viewBox="0 0 9 17" fill="#e4ebf5">
              <path d="M0 0h9v17H0z" />
              <path d="M1 3h7M1 6h7M1 9h7M1 12h7" stroke="#2b579a" />
            </svg>
          </div>
        </TaskIcon>
        <TaskIcon>
          <svg width="24" height="22" viewBox="0 0 24 22" fill="none">
            <ellipse cx="11" cy="7" rx="10" ry="6" fill="#e6d5dc" stroke="#c97a8a" />
            <path d="M5 9l10-6" stroke="#d84b5f" strokeWidth="2" />
            <path d="M11 10l6 6M15 10l-3 6" stroke="#466d89" strokeWidth="1.800" />
            <circle cx="19" cy="18" r="3" stroke="#2f8aa8" strokeWidth="1.500" />
          </svg>
        </TaskIcon>
        <TaskIcon>
          <svg width="17" height="23" viewBox="0 0 17 23">
            <rect width="17" height="23" fill="#fff" />
            <rect x="2" y="2" width="13" height="4" fill="#111" />
            <path d="M3 9h2v2H3zM7.500 9h2v2h-2zM12 9h2v2h-2zM3 13h2v2H3zM7.500 13h2v2h-2zM12 13h2v2h-2zM3 17h2v2H3zM7.500 17h2v2h-2zM12 17h2v2h-2z" fill="#333" />
          </svg>
        </TaskIcon>
        <TaskIcon>
          <div className="flex h-[23px] w-[23px] items-center justify-center bg-[#10a5e0]">
            <span className="flex h-[15px] w-[15px] items-center justify-center rounded-full bg-white text-[12px] font-bold leading-none text-[#10a5e0]">S</span>
          </div>
        </TaskIcon>
        <TaskIcon>
          <svg width="22" height="22" viewBox="0 0 22 22">
            <circle cx="11" cy="11" r="11" fill="#d9452f" />
            <path d="M11 11L1.500 16.500A11 11 0 0 0 14 21.600z" fill="#3aa04a" />
            <path d="M11 11l3 10.600A11 11 0 0 0 21 6z" fill="#f4c320" />
            <circle cx="11" cy="11" r="5" fill="#5b9bf0" stroke="#fff" strokeWidth="1.600" />
          </svg>
        </TaskIcon>
        <TaskIcon>
          <YahooIcon />
        </TaskIcon>
      </div>
      <div className="flex-1" />
      <div className="flex h-full w-[241px] items-center">
        <Slot className="w-[28px]">
          <div className="flex h-[21px] w-[21px] items-center justify-center rounded-full border-2 border-[#b8e3f2] bg-[#1b9fd0] text-[14px] font-bold leading-none text-white">?</div>
        </Slot>
        <Slot className="w-[28px]">
          <svg width="11" height="7" viewBox="0 0 11 7" fill="none" stroke="#e6e6e6" strokeWidth="1.300">
            <path d="M.5 6l5-5 5 5" />
          </svg>
        </Slot>
        <Slot className="w-[20px]">
          <div className="scale-[.72]">
            <YahooIcon />
          </div>
        </Slot>
        <Slot className="w-[22px]">
          <svg width="15" height="12" viewBox="0 0 15 12" fill="#e6e6e6">
            <path d="M0 0h4v2H0zM2 3h13v8H2z" />
          </svg>
        </Slot>
        <div className="ml-[2px] text-[11px] leading-[16px] text-[#e6e6e6]">
          EN
          <br />
          IN
        </div>
      </div>
      <div className="absolute bottom-0 left-[599px] h-[2px] w-[45px] bg-[#aee0f0]" />
      <div className="absolute bottom-0 left-[649px] h-[2px] w-[37px] bg-[#aee0f0]" />
      <div className="absolute bottom-0 left-[787px] h-[2px] w-[37px] bg-[#aee0f0]" />
      <div className="absolute bottom-0 left-[878px] h-[2px] w-[38px] bg-[#aee0f0]" />
      <div className="absolute bottom-0 left-[925px] h-[2px] w-[37px] bg-[#aee0f0]" />
    </div>
  );
}

function RecorderButton({ children, dim }: { children: ReactNode; dim?: boolean }) {
  return (
    <div className={`flex h-[16px] w-[19px] items-center justify-center border border-[#c4c4bc] shadow-[1px_1px_0_#9a9a92] ${dim ? 'bg-[#d8d8d2]' : 'bg-[#ecece6]'}`}>
      {children}
    </div>
  );
}

function RecorderPanel() {
  return (
    <div className="absolute left-[1154px] top-[601px] flex h-[119px] w-[122px] flex-col border-x-[3px] border-[#0a5cc8] bg-[#e8e8e2]">
      <div className="-mx-[3px] flex h-[21px] shrink-0 items-center bg-[#0a5cc8] pl-[5px] text-[10.800px] font-bold text-white">
        <svg width="15" height="15" viewBox="0 0 15 15">
          <circle cx="7.500" cy="7.500" r="7.500" fill="#2a8fd8" />
          <path d="M4 1c4 0 6 3 5 6s-1 5-3 7c-3-2-5-5-4-8z" fill="#5cae3c" />
        </svg>
        <span className="ml-[6px]">Recorder Panel</span>
      </div>
      <div className="flex h-[24px] shrink-0 items-end gap-[2.500px] pl-[4px]">
        <RecorderButton dim>
          <span className="h-[9px] w-[9px] rounded-full bg-[#b5b5b0]" />
        </RecorderButton>
        <RecorderButton>
          <svg width="7" height="9" viewBox="0 0 7 9" fill="#111"><path d="M0 0h2.500v9H0zM4.500 0H7v9H4.500z" /></svg>
        </RecorderButton>
        <RecorderButton>
          <span className="h-[9px] w-[9px] bg-black" />
        </RecorderButton>
        <RecorderButton>
          <svg width="13" height="11" viewBox="0 0 13 11" fill="none" stroke="#222">
            <path d="M0 8.500h13M0 10.500h13M6.500 0v8M3 2.500h7M3 5.500h7" />
          </svg>
        </RecorderButton>
        <RecorderButton>
          <svg width="12" height="11" viewBox="0 0 12 11">
            <path d="M0 11l2-4 5-6 4 3-5 6z" fill="#d8c24a" stroke="#6a6a2a" strokeWidth=".7" />
          </svg>
        </RecorderButton>
      </div>
      <div className="ml-[5px] mr-px mt-[5px] flex h-[45px] shrink-0 rounded-[3px] border border-[#c8c8c0] bg-[#eeeeea] shadow-[0_1px_1px_#aaa]">
        <div className="min-w-0 flex-1 pl-[5px] pt-[5px]">
          <div className="flex h-[13px] items-center gap-[5px] whitespace-nowrap text-[10.500px] text-[#444]">
            <span className="h-[13px] w-[13px] shrink-0 border border-[#7a8aa8] bg-white" />
            Record Audio
          </div>
          <div className="mt-[8px] flex h-[14px] items-center">
            <svg width="16" height="15" viewBox="0 0 16 15">
              <circle cx="4.500" cy="4.500" r="4" fill="#2a5fb0" />
              <path d="M6 8l7 6" stroke="#222" strokeWidth="2" />
            </svg>
            <div className="relative ml-[1px] h-[3px] w-[66px] bg-[#7a7a7a]">
              <div className="h-full w-[32px] bg-[#3f8a3f]" />
              <svg width="11" height="14" viewBox="0 0 11 14" className="absolute -top-[6px] left-[27px]">
                <path d="M.5.500h10v8l-5 5-5-5z" fill="#f2f2ee" stroke="#666" />
              </svg>
            </div>
          </div>
        </div>
        <div className="my-[4px] mr-[3px] flex w-[10px] shrink-0 flex-col justify-between bg-[#0d3b0d] p-px">
          {Array.from({ length: 9 }, (_, i) => (
            <span key={i} className={`h-[3px] ${i < 1 ? 'bg-[#1a5a1a]' : 'bg-[#1f8a2a]'}`} />
          ))}
        </div>
      </div>
      <div className="-mr-[3px] ml-[5px] mt-[6px] flex h-[14px] shrink-0 items-center whitespace-nowrap bg-black pl-px font-['Liberation_Sans',sans-serif] text-[12px] text-[#2f9a3f]">
        00:01:12 / 220 KB
      </div>
    </div>
  );
}

export default function App() {
  return (
    <div className="relative h-[720px] w-[1280px] overflow-hidden bg-white font-['Open_Sans','Liberation_Sans',sans-serif]">
      <div className="relative bg-[#217346]">
        <CircuitArt />
        <TitleBar />
        <TabRow />
      </div>
      <Ribbon />
      <QuickAccess />
      <FormulaBar />
      <Sheet />
      <SheetTabs />
      <StatusBar />
      <Taskbar />
      <RecorderPanel />
    </div>
  );
}
